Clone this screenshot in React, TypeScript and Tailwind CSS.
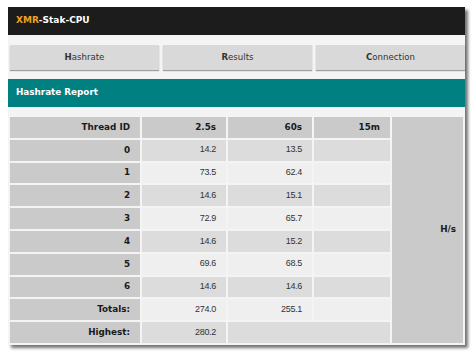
import React from 'react'

const rows = [
  { id: '0', a: '14.2', b: '13.5' },
  { id: '1', a: '73.5', b: '62.4' },
  { id: '2', a: '14.6', b: '15.1' },
  { id: '3', a: '72.9', b: '65.7' },
  { id: '4', a: '14.6', b: '15.2' },
  { id: '5', a: '69.6', b: '68.5' },
  { id: '6', a: '14.6', b: '14.6' },
]

const NavButton = ({ label }: { label: string }) => (
  <div className="flex-1 h-[25px] flex items-center justify-center bg-[#d9d9d9] shadow-[0_1px_1px_rgba(0,0,0,0.35)] text-[8.6px] text-[#333]">
    <span className="font-bold">{label[0]}</span>
    <span>{label.slice(1)}</span>
  </div>
)

const num = "text-right pr-[10px] text-[#333] text-[9px] tracking-[-0.3px] font-['Liberation_Sans',Arial,sans-serif]"

export default function App() {
  const head = 'bg-[#cacaca] font-bold text-[#1a1a1a] text-right pr-[10px] text-[8.8px]'
  return (
    <div className="bg-white w-[474px] h-[353px] pl-[8px] pt-[7px]" style={{ fontFamily: 'Tahoma, "DejaVu Sans", sans-serif' }}>
      <div className="w-[457px] h-[338px] bg-[#f4f4f4] shadow-[3px_3px_3px_rgba(0,0,0,0.55)]">
        {/* Header */}
        <div className="h-[28px] bg-[#1c1c1c] flex items-center pl-[8px] text-[9px] font-bold">
          <span className="text-[#f0a020]">XMR</span>
          <span className="text-white">-Stak-CPU</span>
        </div>

        {/* Tabs */}
        <div className="mt-[10px] flex gap-[4px] pl-[2px]">
          <NavButton label="Hashrate" />
          <NavButton label="Results" />
          <NavButton label="Connection" />
        </div>

        {/* Title bar */}
        <div className="mt-[9px] h-[28px] bg-[#008080] flex items-center pl-[8px] text-white font-bold text-[8.8px]">
          Hashrate Report
        </div>

        {/* Report */}
        <table className="mt-[8px] border-separate border-spacing-[2px] w-[457px]">
          <colgroup>
            <col className="w-[130px]" />
            <col className="w-[84px]" />
            <col className="w-[84px]" />
            <col className="w-[76px]" />
            <col className="w-[71px]" />
          </colgroup>
          <tbody>
            <tr className="h-[20.8px]">
              <th className={head}>Thread ID</th>
              <th className={head}>2.5s</th>
              <th className={head}>60s</th>
              <th className={head}>15m</th>
              <th rowSpan={10} className="bg-[#cacaca] font-bold text-[#1a1a1a] text-right pr-[7px] text-[8.8px]">H/s</th>
            </tr>
            {rows.map((r, i) => {
              const bg = i % 2 === 0 ? 'bg-[#dcdcdc]' : 'bg-[#efefef]'
              return (
                <tr key={r.id} className="h-[20.8px]">
                  <th className={head}>{r.id}</th>
                  <td className={`${bg} ${num}`}>{r.a}</td>
                  <td className={`${bg} ${num}`}>{r.b}</td>
                  <td className={bg}></td>
                </tr>
              )
            })}
            <tr className="h-[20.8px]">
              <th className={head}>Totals:</th>
              <td className={`bg-[#efefef] ${num}`}>274.0</td>
              <td className={`bg-[#efefef] ${num}`}>255.1</td>
              <td className="bg-[#efefef]"></td>
            </tr>
            <tr className="h-[20.8px]">
              <th className={head}>Highest:</th>
              <td className={`bg-[#dcdcdc] ${num}`}>280.2</td>
              <td colSpan={2} className="bg-[#dcdcdc]"></td>
            </tr>
          </tbody>
        </table>
      </div>
    </div>
  )
}
